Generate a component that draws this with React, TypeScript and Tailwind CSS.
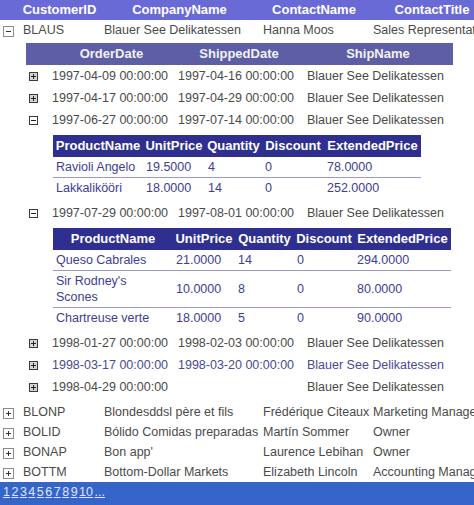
import clsx from 'clsx';

type Item = { name: React.ReactNode; price: string; qty: string; disc: string; ext: string };
type Order = { date: string; shipped: string; open?: boolean; hl?: boolean; items?: Item[]; cols?: string; width?: string };

const orders: Order[] = [
  { date: '1997-04-09 00:00:00', shipped: '1997-04-16 00:00:00' },
  { date: '1997-04-17 00:00:00', shipped: '1997-04-29 00:00:00' },
  {
    date: '1997-06-27 00:00:00',
    shipped: '1997-07-14 00:00:00',
    open: true,
    cols: 'grid-cols-[90px_62px_57px_62px_97px]',
    width: 'w-[368px]',
    items: [
      { name: 'Ravioli Angelo', price: '19.5000', qty: '4', disc: '0', ext: '78.0000' },
      { name: 'Lakkalikööri', price: '18.0000', qty: '14', disc: '0', ext: '252.0000' },
    ],
  },
  {
    date: '1997-07-29 00:00:00',
    shipped: '1997-08-01 00:00:00',
    open: true,
    cols: 'grid-cols-[120px_62px_59px_60px_97px]',
    width: 'w-[398px]',
    items: [
      { name: 'Queso Cabrales', price: '21.0000', qty: '14', disc: '0', ext: '294.0000' },
      { name: <>Sir Rodney's<br />Scones</>, price: '10.0000', qty: '8', disc: '0', ext: '80.0000' },
      { name: 'Chartreuse verte', price: '18.0000', qty: '5', disc: '0', ext: '90.0000' },
    ],
  },
  { date: '1998-01-27 00:00:00', shipped: '1998-02-03 00:00:00' },
  { date: '1998-03-17 00:00:00', shipped: '1998-03-20 00:00:00', hl: true },
  { date: '1998-04-29 00:00:00', shipped: '' },
];

const customers = [
  ['BLONP', 'Blondesddsl père et fils', 'Frédérique Citeaux', 'Marketing Manager'],
  ['BOLID', 'Bólido Comidas preparadas', 'Martín Sommer', 'Owner'],
  ['BONAP', "Bon app'", 'Laurence Lebihan', 'Owner'],
  ['BOTTM', 'Bottom-Dollar Markets', 'Elizabeth Lincoln', 'Accounting Manager'],
];

const topCols = 'grid grid-cols-[19px_81px_159px_110px_126px] w-[495px]';
const orderCols = 'grid grid-cols-[22px_127px_128px_150px]';

function ExpandBox({ open }: { open?: boolean }) {
  return (
    <svg width="11" height="11" viewBox="0 0 11 11" className="ml-[3px] mt-[3px]">
      <rect x="0.5" y="0.5" width="10" height="10" fill="#fff" stroke="#8c8c8c" />
      <path d="M3 5.5h5" stroke="#333" />
      {!open && <path d="M5.5 3v5" stroke="#333" />}
    </svg>
  );
}

function NodeIcon({ open }: { open?: boolean }) {
  return (
    <svg width="9" height="9" viewBox="0 0 9 9" className="ml-[3px]">
      <rect x="0.5" y="0.5" width="8" height="8" fill={open ? '#fff' : '#d4d4d4'} stroke="#3a3a3a" />
      <path d="M2 4.5h5" stroke="#222" />
      {!open && <path d="M4.5 2v5" stroke="#222" />}
    </svg>
  );
}

function DetailTable({ cols, width, items }: { cols: string; width: string; items: Item[] }) {
  return (
    <div className={width}>
      <div className={clsx('grid h-[22px] items-center bg-[#2f2f8f] text-[13px] font-bold text-white', cols)}>
        {['ProductName', 'UnitPrice', 'Quantity', 'Discount', 'ExtendedPrice'].map((h) => (
          <div key={h} className="text-center whitespace-nowrap">
            {h}
          </div>
        ))}
      </div>
      {items.map((it, i) => (
        <div
          key={i}
          className={clsx(
            'grid items-center py-[2px] leading-[16px] text-[12.5px] text-[#3d3d96]',
            cols,
            i < items.length - 1 && 'border-b border-[#9a9ad0]'
          )}
        >
          <div className="pl-[3px]">{it.name}</div>
          <div className="pl-[3px]">{it.price}</div>
          <div className="pl-[3px]">{it.qty}</div>
          <div className="pl-[3px]">{it.disc}</div>
          <div className="pl-[3px]">{it.ext}</div>
        </div>
      ))}
    </div>
  );
}

function OrderRow({ o }: { o: Order }) {
  return (
    <>
      <div className={clsx(orderCols, 'h-[22px] items-center whitespace-nowrap', o.hl ? 'text-[#4a4a94]' : 'text-[#4a4a4a]')}>
        <div className="flex items-center">
          <NodeIcon open={o.open} />
        </div>
        <div className="pl-1">{o.date}</div>
        <div className="pl-[3px]">{o.shipped}</div>
        <div className="pl-1">Blauer See Delikatessen</div>
      </div>
      {o.open && o.items && (
        <div className="pl-[27px] py-1">
          <DetailTable cols={o.cols!} width={o.width!} items={o.items} />
        </div>
      )}
    </>
  );
}

export default function App() {
  return (
    <div className="w-[474px] h-[505px] overflow-hidden bg-white font-['Liberation_Sans',Arial,sans-serif] text-[12.5px] text-[#4a4a4a]">
      <div className="w-[474px] overflow-hidden">
        <div className={clsx(topCols, 'h-5 items-center bg-[#6a6ad6] text-[13px] font-bold text-white')}>
          <div />
          <div className="text-center">CustomerID</div>
          <div className="text-center">CompanyName</div>
          <div className="text-center">ContactName</div>
          <div className="text-center">ContactTitle</div>
        </div>

        <div className={clsx(topCols, 'h-5 items-center whitespace-nowrap')}>
          <div className="flex items-center">
            <ExpandBox open />
          </div>
          <div className="pl-1">BLAUS</div>
          <div className="pl-1">Blauer See Delikatessen</div>
          <div className="pl-1">Hanna Moos</div>
          <div className="pl-1">Sales Representative</div>
        </div>

        <div className="ml-[26px] w-[427px] pt-[3px] pb-1">
          <div className={clsx(orderCols, 'h-[22px] items-center bg-[#5e5ea6] text-[13px] font-bold text-[#f2f2f2]')}>
            <div />
            <div className="text-center">OrderDate</div>
            <div className="text-center">ShippedDate</div>
            <div className="text-center">ShipName</div>
          </div>
          {orders.map((o) => (
            <OrderRow key={o.date} o={o} />
          ))}
        </div>

        {customers.map((c) => (
          <div key={c[0]} className={clsx(topCols, 'h-5 items-center whitespace-nowrap')}>
            <div className="flex items-center">
              <ExpandBox />
            </div>
            <div className="pl-1">{c[0]}</div>
            <div className="pl-1">{c[1]}</div>
            <div className="pl-1">{c[2]}</div>
            <div className="pl-1">{c[3]}</div>
          </div>
        ))}
      </div>

      <div className="flex h-[23px] items-center gap-[1.5px] bg-[#3565c9] pl-[3px] pb-[2px] text-[12.5px] text-[#dfe6ff]">
        {['1', '2', '3', '4', '5', '6', '7', '8', '9', '10', '...'].map((p) => (
          <a key={p} href="#" className="underline">
            {p}
          </a>
        ))}
      </div>
    </div>
  );
}
